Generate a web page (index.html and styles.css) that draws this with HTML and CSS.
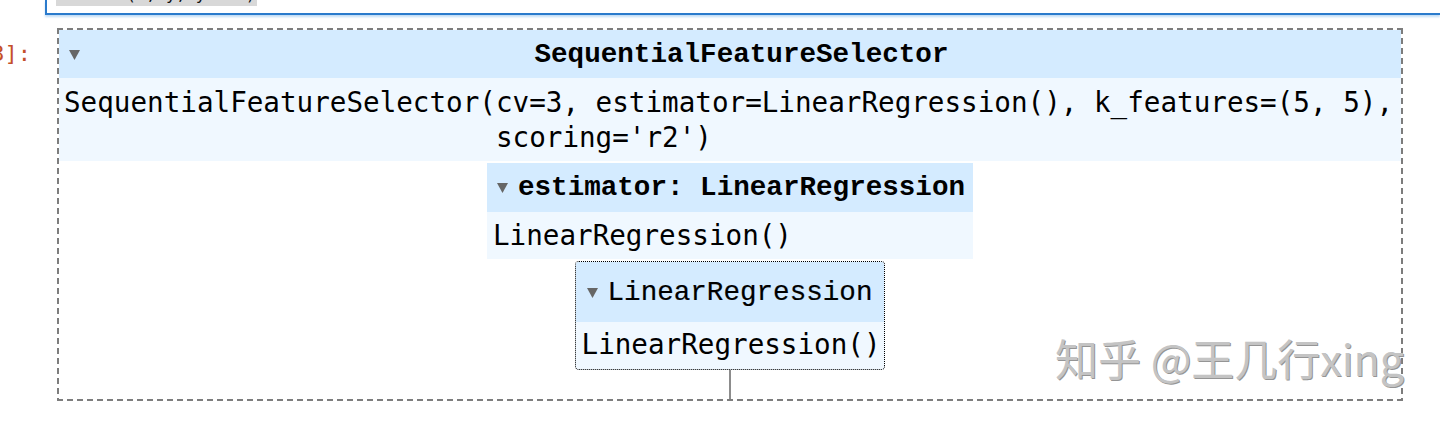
FILE: index.html
```html
<!DOCTYPE html>
<html lang="en">
<head>
<meta charset="utf-8">
<title>SequentialFeatureSelector</title>
<link rel="stylesheet" href="styles.css">
</head>
<body>
<div class="page">
  <div class="prev-cell">
    <div class="prev-code"><span class="prev-text">sfs.fit(X, y, ytest)</span></div>
  </div>
  <div class="out-row">
    <div class="prompt"><span>Out[3]:</span></div>
    <div class="sk-wrap">
      <div class="hdr hdr-top">
        <svg class="arrow" width="11" height="11" viewBox="0 0 11 11"><path d="M0 1H11L5.5 11Z" fill="#666666"/></svg>
        <span class="hdr-title">SequentialFeatureSelector</span>
      </div>
      <pre class="body body-top">SequentialFeatureSelector(cv=3, estimator=LinearRegression(), k_features=(5, 5),
                          scoring='r2')</pre>
      <div class="serial">
        <div class="est-block">
          <div class="hdr hdr-est">
            <svg class="arrow" width="11" height="11" viewBox="0 0 11 11"><path d="M0 1H11L5.5 11Z" fill="#666666"/></svg>
            <span class="hdr-name">estimator: LinearRegression</span>
          </div>
          <pre class="body body-est">LinearRegression()</pre>
        </div>
        <div class="estimator">
          <div class="hdr hdr-lr">
            <svg class="arrow" width="11" height="11" viewBox="0 0 11 11"><path d="M0 1H11L5.5 11Z" fill="#666666"/></svg>
            <span class="hdr-plain">LinearRegression</span>
          </div>
          <pre class="body body-lr">LinearRegression()</pre>
        </div>
        <div class="connector"></div>
      </div>
    </div>
  </div>
  <div class="watermark">知乎 @王几行xing</div>
</div>
</body>
</html>
```
FILE: styles.css
```css
html, body {
  margin: 0;
  padding: 0;
  background: #ffffff;
}

body {
  width: 1440px;
  height: 425px;
  overflow: hidden;
}

.page {
  position: relative;
  width: 1440px;
  height: 425px;
  overflow: hidden;
}

/* previous (selected) input cell, mostly scrolled out of view */
.prev-cell {
  margin-left: 45px;
  height: 13px;
  border-left: 2px solid #2b7bcc;
  border-bottom: 2px solid #2b7bcc;
  box-shadow: 0 2px 2px rgba(120, 180, 235, 0.45);
}

.prev-code {
  margin-left: 9px;
  width: 201px;
  height: 6px;
  background: #d8d8d8;
  overflow: hidden;
}

.prev-text {
  display: block;
  margin-top: -15px;
  font-family: "DejaVu Sans Mono", monospace;
  font-size: 16.6px;
  line-height: 20px;
  white-space: pre;
  color: #111;
}

/* output row */
.out-row {
  display: flex;
  align-items: flex-start;
  margin-top: 13px;
}

.prompt {
  display: flex;
  justify-content: flex-end;
  width: 31px;
  flex: none;
  padding-top: 13px;
  font-family: "DejaVu Sans Mono", monospace;
  font-size: 22px;
  line-height: 26px;
  color: #c4502a;
  white-space: nowrap;
}

.prompt span {
  flex: none;
}

/* dashed wrapper */
.sk-wrap {
  flex: none;
  width: 1346px;
  margin-left: 26px;
  padding: 2px 2px 2px 2px;
  box-sizing: border-box;
  background-color: #ffffff;
  background-image:
    repeating-linear-gradient(to right, #7d7d7d 0 6px, transparent 6px 10px),
    repeating-linear-gradient(to right, #7d7d7d 0 6px, transparent 6px 10px),
    repeating-linear-gradient(to bottom, #7d7d7d 0 6px, transparent 6px 10px),
    repeating-linear-gradient(to bottom, #7d7d7d 0 6px, transparent 6px 10px);
  background-size: 100% 2px, 100% 2px, 2px 100%, 2px 100%;
  background-position: left top, left bottom, left top, right top;
  background-repeat: no-repeat;
}

.hdr {
  display: flex;
  align-items: center;
  background: #d4ebff;
  font-family: "Liberation Mono", "Courier New", monospace;
  font-size: 27.6px;
  color: #000;
  white-space: nowrap;
  box-sizing: border-box;
}

.arrow {
  flex: none;
  display: block;
}

.hdr-top {
  height: 48px;
  padding: 0 8px 0 10px;
}

.hdr-title {
  flex: 1;
  margin-left: 10px;
  text-align: center;
  font-weight: bold;
}

.body {
  margin: 0;
  background: #f0f8ff;
  font-family: "DejaVu Sans Mono", monospace;
  font-size: 27.6px;
  line-height: 35px;
  color: #000;
  white-space: pre;
}

.body-top {
  height: 83px;
  box-sizing: border-box;
  padding: 7px 0 0 5px;
}

.serial {
  display: flex;
  flex-direction: column;
  align-items: center;
}

.est-block {
  margin-top: 2px;
}

.hdr-est {
  height: 49px;
  padding: 0 8px 0 10px;
}

.hdr-name {
  margin-left: 10px;
  font-weight: bold;
}

.body-est {
  height: 47px;
  box-sizing: border-box;
  padding: 6px 0 0 6px;
}

.estimator {
  margin-top: 2px;
  border: 1px dotted #000;
  border-radius: 4px;
  overflow: hidden;
  background: #f0f8ff;
}

.hdr-lr {
  height: 60px;
  padding: 0 12px 0 11px;
}

.hdr-plain {
  margin-left: 10px;
  -webkit-text-stroke: 0.2px #000;
}

.body-lr {
  height: 47px;
  box-sizing: border-box;
  padding: 5px 0 0 6px;
}

.connector {
  width: 2px;
  height: 29px;
  background: #8c8c8c;
}

/* watermark overlay */
.watermark {
  position: absolute;
  left: 1055px;
  top: 336px;
  font-family: "Noto Sans CJK SC", "Noto Sans", sans-serif;
  font-size: 43px;
  line-height: 1;
  color: #c4c4c4;
  text-shadow: 1px 1px 0 #959595;
  white-space: nowrap;
}
```
